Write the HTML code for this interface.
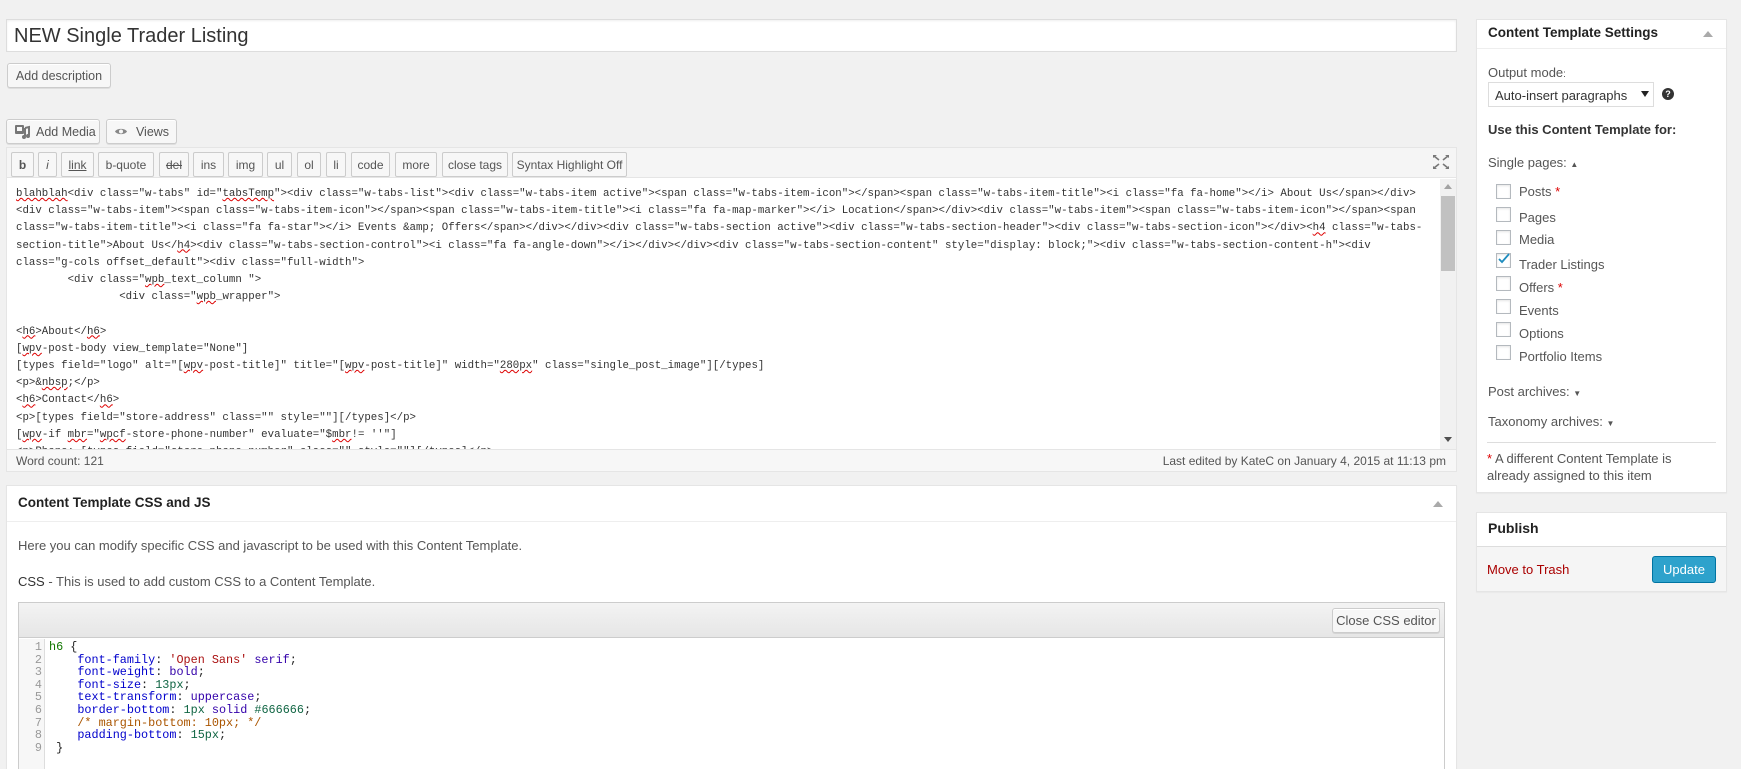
<!DOCTYPE html>
<html style="height:769px;overflow:hidden"><head><meta charset="utf-8"><style>
*{box-sizing:border-box;margin:0;padding:0}
body{width:1741px;height:769px;overflow:hidden;background:#f1f1f1;font-family:"Liberation Sans",sans-serif;font-size:13px;color:#444;position:relative}
.a{position:absolute}
.btn{position:absolute;background:#f7f7f7;border:1px solid #ccc;border-radius:3px;box-shadow:0 1px 0 #fff inset,0 1px 0 rgba(0,0,0,.08);color:#555;font-size:12.5px;display:flex;align-items:center;justify-content:center;white-space:nowrap}
.tb{position:absolute;top:152px;height:25px;background:#f7f7f7;border:1px solid #ccc;border-radius:2px;color:#555;font-size:12px;display:flex;align-items:center;justify-content:center;white-space:nowrap}
.box{position:absolute;background:#fff;border:1px solid #e5e5e5;box-shadow:0 1px 1px rgba(0,0,0,.04)}
.code{position:absolute;left:16px;font-family:"Liberation Mono",monospace;font-size:10.75px;line-height:17.2px;color:#333;white-space:pre}
.sq{text-decoration:underline wavy #d00;text-decoration-thickness:1px}
.cb{position:absolute;left:1496px;width:15px;height:15px;border:1px solid #b4b9be;background:#fff;box-shadow:inset 0 1px 2px rgba(0,0,0,.1)}
.cl{position:absolute;left:1519px;font-size:13px;color:#555}
.cm{font-family:"Liberation Mono",monospace;font-size:11.8px;line-height:12.6px;white-space:pre}
</style></head><body>

<div class="a" style="left:6px;top:19px;width:1451px;height:33px;background:#fff;border:1px solid #ddd;box-shadow:inset 0 1px 2px rgba(0,0,0,.07)"></div>
<div class="a" style="left:14px;top:23px;font-size:20px;color:#333;line-height:26px">NEW Single Trader Listing</div>
<div class="btn" style="left:7px;top:63px;width:104px;height:25px">Add description</div>

<div class="btn" style="left:6px;top:119px;width:94px;height:25px;justify-content:flex-start;padding-left:8px"><svg width="16" height="14" viewBox="0 0 16 14" style="margin-right:5px"><rect x="0" y="0" width="9" height="9" rx="1" fill="#777"/><rect x="2" y="2" width="5" height="4" fill="#f7f7f7"/><path d="M10 3v8M10 3l4-1v8" stroke="#777" stroke-width="2" fill="none"/><circle cx="9" cy="12" r="2" fill="#777"/><circle cx="13" cy="11" r="2" fill="#777"/></svg>Add Media</div>
<div class="btn" style="left:106px;top:119px;width:71px;height:25px"><svg width="14" height="9" viewBox="0 0 14 9" style="margin-right:8px"><path d="M1 4.5C3 1 11 1 13 4.5C11 8 3 8 1 4.5Z" fill="#888"/><circle cx="7" cy="4.5" r="2" fill="#f7f7f7"/></svg>Views</div>

<div class="a" style="left:6px;top:147px;width:1451px;height:325px;border:1px solid #e5e5e5;background:#fff"></div>
<div class="a" style="left:7px;top:148px;width:1449px;height:30px;background:#f5f5f5;border-bottom:1px solid #e5e5e5"></div>
<div class="tb" style="left:11px;width:23px;font-weight:bold">b</div>
<div class="tb" style="left:38px;width:19px;font-style:italic">i</div>
<div class="tb" style="left:61px;width:33px;text-decoration:underline">link</div>
<div class="tb" style="left:98px;width:56px">b-quote</div>
<div class="tb" style="left:159px;width:30px;text-decoration:line-through">del</div>
<div class="tb" style="left:193px;width:31px">ins</div>
<div class="tb" style="left:228px;width:35px">img</div>
<div class="tb" style="left:267px;width:25px">ul</div>
<div class="tb" style="left:297px;width:24px">ol</div>
<div class="tb" style="left:326px;width:20px">li</div>
<div class="tb" style="left:351px;width:39px">code</div>
<div class="tb" style="left:395px;width:42px">more</div>
<div class="tb" style="left:442px;width:66px">close tags</div>
<div class="tb" style="left:512px;width:115px">Syntax Highlight Off</div>
<svg class="a" style="left:1433px;top:155px" width="16" height="14" viewBox="0 0 16 14"><path d="M1 1l5 4M15 1l-5 4M1 13l5-4M15 13l-5-4" stroke="#777" stroke-width="1.6"/><path d="M0 0h4L0 3ZM16 0h-4l4 3ZM0 14h4l-4-3ZM16 14h-4l4-3Z" fill="#777"/></svg>

<div class="a" style="left:7px;top:178px;width:1433px;height:271px;overflow:hidden">
<div class="code" style="left:9px;top:8px"><span class="sq">blahblah</span>&lt;div class="w-tabs" id="<span class="sq">tabsTemp</span>"&gt;&lt;div class="w-tabs-list"&gt;&lt;div class="w-tabs-item active"&gt;&lt;span class="w-tabs-item-icon"&gt;&lt;/span&gt;&lt;span class="w-tabs-item-title"&gt;&lt;i class="fa fa-home"&gt;&lt;/i&gt; About Us&lt;/span&gt;&lt;/div&gt;
&lt;div class="w-tabs-item"&gt;&lt;span class="w-tabs-item-icon"&gt;&lt;/span&gt;&lt;span class="w-tabs-item-title"&gt;&lt;i class="fa fa-map-marker"&gt;&lt;/i&gt; Location&lt;/span&gt;&lt;/div&gt;&lt;div class="w-tabs-item"&gt;&lt;span class="w-tabs-item-icon"&gt;&lt;/span&gt;&lt;span
class="w-tabs-item-title"&gt;&lt;i class="fa fa-star"&gt;&lt;/i&gt; Events &amp;amp; Offers&lt;/span&gt;&lt;/div&gt;&lt;/div&gt;&lt;div class="w-tabs-section active"&gt;&lt;div class="w-tabs-section-header"&gt;&lt;div class="w-tabs-section-icon"&gt;&lt;/div&gt;&lt;<span class="sq">h4</span> class="w-tabs-
section-title"&gt;About Us&lt;/<span class="sq">h4</span>&gt;&lt;div class="w-tabs-section-control"&gt;&lt;i class="fa fa-angle-down"&gt;&lt;/i&gt;&lt;/div&gt;&lt;/div&gt;&lt;div class="w-tabs-section-content" style="display: block;"&gt;&lt;div class="w-tabs-section-content-h"&gt;&lt;div
class="g-cols offset_default"&gt;&lt;div class="full-width"&gt;
        &lt;div class="<span class="sq">wpb</span>_text_column "&gt;
                &lt;div class="<span class="sq">wpb</span>_wrapper"&gt;

&lt;<span class="sq">h6</span>&gt;About&lt;/<span class="sq">h6</span>&gt;
[<span class="sq">wpv</span>-post-body view_template="None"]
[types field="logo" alt="[<span class="sq">wpv</span>-post-title]" title="[<span class="sq">wpv</span>-post-title]" width="<span class="sq">280px</span>" class="single_post_image"][/types]
&lt;p&gt;&amp;<span class="sq">nbsp</span>;&lt;/p&gt;
&lt;<span class="sq">h6</span>&gt;Contact&lt;/<span class="sq">h6</span>&gt;
&lt;p&gt;[types field="store-address" class="" style=""][/types]&lt;/p&gt;
[<span class="sq">wpv</span>-if <span class="sq">mbr</span>="<span class="sq">wpcf</span>-store-phone-number" evaluate="$<span class="sq">mbr</span>!= ''"]
&lt;p&gt;Phone: [types field="store-phone-number" class="" style=""][/types]&lt;/p&gt;</div>
</div>
<div class="a" style="left:1440px;top:179px;width:16px;height:270px;background:#f1f1f1"></div>
<div class="a" style="left:1441px;top:196px;width:14px;height:75px;background:#c1c1c1"></div>
<div class="a" style="left:1444px;top:184px;width:0;height:0;border:4px solid transparent;border-bottom:5px solid #a3a3a3;border-top:0"></div>
<div class="a" style="left:1444px;top:437px;width:0;height:0;border:4px solid transparent;border-top:5px solid #505050;border-bottom:0"></div>
<div class="a" style="left:7px;top:449px;width:1449px;height:22px;background:#f7f7f7;border-top:1px solid #e5e5e5;font-size:12px;color:#555"><span class="a" style="left:9px;top:4px">Word count: 121</span><span class="a" style="right:10px;top:4px">Last edited by KateC on January 4, 2015 at 11:13 pm</span></div>

<div class="box" style="left:6px;top:485px;width:1451px;height:284px;border-bottom:0"></div>
<div class="a" style="left:7px;top:521px;width:1449px;height:1px;background:#eee"></div>
<div class="a" style="left:18px;top:495px;font-weight:bold;font-size:13.5px;color:#222">Content Template CSS and JS</div>
<div class="a" style="left:1433px;top:501px;border:5px solid transparent;border-bottom:6px solid #aaa;border-top:0"></div>
<div class="a" style="left:18px;top:538px;color:#555">Here you can modify specific CSS and javascript to be used with this Content Template.</div>
<div class="a" style="left:18px;top:574px;color:#555"><span style="color:#333">CSS</span> - This is used to add custom CSS to a Content Template.</div>
<div class="a" style="left:18px;top:602px;width:1427px;height:167px;border:1px solid #ccc;border-bottom:0;background:#fff"></div>
<div class="a" style="left:19px;top:603px;width:1425px;height:35px;background:linear-gradient(#f3f3f3,#e6e6e6);border-bottom:1px solid #ccc"></div>
<div class="btn" style="left:1332px;top:608px;width:108px;height:25px;font-size:13px">Close CSS editor</div>
<div class="a" style="left:19px;top:639px;width:26px;height:130px;background:#f7f7f7;border-right:1px solid #ddd"></div>
<div class="a cm" style="left:19px;top:641px;width:23px;text-align:right;color:#999">1
2
3
4
5
6
7
8
9</div>
<div class="a cm" style="left:49px;top:641px;color:#222"><span style="color:#170">h6</span> {
    <span style="color:#00c">font-family</span>: <span style="color:#a11">'Open Sans'</span> <span style="color:#30a">serif</span>;
    <span style="color:#00c">font-weight</span>: <span style="color:#30a">bold</span>;
    <span style="color:#00c">font-size</span>: <span style="color:#164">13px</span>;
    <span style="color:#00c">text-transform</span>: <span style="color:#30a">uppercase</span>;
    <span style="color:#00c">border-bottom</span>: <span style="color:#164">1px</span> <span style="color:#30a">solid</span> <span style="color:#164">#666666</span>;
    <span style="color:#a50">/* margin-bottom: 10px; */</span>
    <span style="color:#00c">padding-bottom</span>: <span style="color:#164">15px</span>;
 }</div>

<div class="box" style="left:1476px;top:19px;width:251px;height:474px"></div>
<div class="a" style="left:1477px;top:48px;width:249px;height:1px;background:#eee"></div>
<div class="a" style="left:1488px;top:25px;font-weight:bold;font-size:13.5px;color:#222">Content Template Settings</div>
<div class="a" style="left:1703px;top:31px;border:5px solid transparent;border-bottom:6px solid #aaa;border-top:0"></div>
<div class="a" style="left:1488px;top:65px;color:#555">Output mode<span style="font-size:10px">:</span></div>
<div class="a" style="left:1488px;top:82px;width:166px;height:25px;border:1px solid #ddd;background:#fff;color:#333;padding:5px 6px">Auto-insert paragraphs</div>
<div class="a" style="left:1641px;top:91px;border:4px solid transparent;border-top:6px solid #222;border-bottom:0"></div>
<div class="a" style="left:1662px;top:88px;width:12px;height:12px;border-radius:6px;background:#333;color:#fff;font-size:9px;font-weight:bold;text-align:center;line-height:12px">?</div>
<div class="a" style="left:1488px;top:122px;font-weight:bold;color:#333">Use this Content Template for:</div>
<div class="a" style="left:1488px;top:155px;color:#555">Single pages: <span style="font-size:8px">▲</span></div>
<div class="cb" style="top:184px"></div><div class="cl" style="top:184px">Posts <span style="color:#d00">*</span></div>
<div class="cb" style="top:207px"></div><div class="cl" style="top:210px">Pages</div>
<div class="cb" style="top:230px"></div><div class="cl" style="top:232px">Media</div>
<div class="cb" style="top:253px"></div><div class="cl" style="top:257px">Trader Listings</div>
<svg class="a" style="left:1496px;top:252px" width="16" height="14"><path d="M3 7l3 3 7-8" stroke="#1e8cbe" stroke-width="1.8" fill="none"/></svg>
<div class="cb" style="top:276px"></div><div class="cl" style="top:280px">Offers <span style="color:#d00">*</span></div>
<div class="cb" style="top:299px"></div><div class="cl" style="top:303px">Events</div>
<div class="cb" style="top:322px"></div><div class="cl" style="top:326px">Options</div>
<div class="cb" style="top:345px"></div><div class="cl" style="top:349px">Portfolio Items</div>
<div class="a" style="left:1488px;top:384px;color:#555">Post archives: <span style="font-size:8px">▼</span></div>
<div class="a" style="left:1488px;top:414px;color:#555">Taxonomy archives: <span style="font-size:8px">▼</span></div>
<div class="a" style="left:1487px;top:442px;width:229px;height:1px;background:#ddd"></div>
<div class="a" style="left:1487px;top:450px;width:230px;color:#555;line-height:17px"><span style="color:#d00">*</span> A different Content Template is already assigned to this item</div>

<div class="box" style="left:1476px;top:512px;width:251px;height:80px"></div>
<div class="a" style="left:1477px;top:546px;width:249px;height:45px;background:#f5f5f5;border-top:1px solid #ddd"></div>
<div class="a" style="left:1488px;top:520px;font-weight:bold;font-size:14px;color:#222">Publish</div>
<div class="a" style="left:1487px;top:562px;color:#a00">Move to Trash</div>
<div class="a" style="left:1652px;top:556px;width:64px;height:27px;background:#2ea2cc;border:1px solid #0074a2;border-radius:3px;color:#fff;font-size:13px;text-align:center;line-height:25px">Update</div>
</body></html>
